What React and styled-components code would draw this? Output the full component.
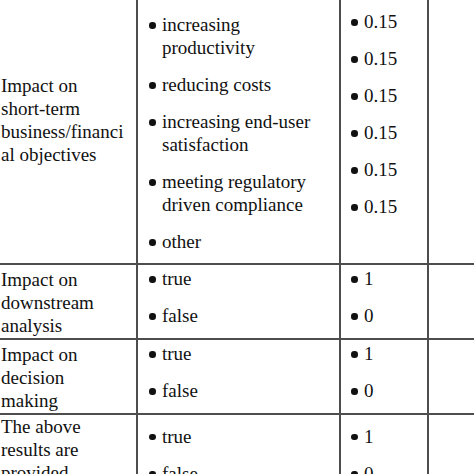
import styled, { createGlobalStyle } from "styled-components";

const GlobalStyle = createGlobalStyle`
  html, body {
    margin: 0;
    padding: 0;
    background: #fff;
    overflow: hidden;
  }
`;

const Table = styled.table`
  border-collapse: collapse;
  table-layout: fixed;
  width: 563px;
  margin: -25.5px 0 0 -4px;
  font-family: "Liberation Serif", "Times New Roman", serif;
  font-size: 19px;
  line-height: 23px;
  color: #111;
`;

const Cell = styled.td`
  border: 2px solid #4d4d4d;
  vertical-align: ${(p) => (p.$middle ? "middle" : "top")};
  padding: ${(p) => p.$top || 0}px ${(p) => p.$right || 0}px
    ${(p) => p.$bottom || 0}px ${(p) => p.$left || 0}px;
`;

const Label = styled(Cell)`
  padding-left: 3px;
  padding-right: 10.5px;
`;

const List = styled.ul`
  list-style: none;
  margin: 0;
  padding: 0;
  display: flex;
  flex-direction: column;
  gap: 14px;
`;

const Item = styled.li`
  display: flex;
  align-items: flex-start;
  &::before {
    content: "";
    flex: none;
    width: 6.5px;
    height: 6.5px;
    margin: 9px 6.5px 0 0;
    border-radius: 50%;
    background: #111;
  }
`;

const rows = [
  {
    label: (
      <>
        Impact on short-term business/financi
        <br />
        al objectives
      </>
    ),
    middle: true,
    labelTop: 0,
    options: [
      "increasing productivity",
      "reducing costs",
      "increasing end-user satisfaction",
      "meeting regulatory driven compliance",
      "other",
    ],
    values: ["0.15", "0.15", "0.15", "0.15", "0.15", "0.15"],
    optTop: 36.5,
    optBottom: 10,
    valTop: 33.5,
  },
  {
    label: "Impact on downstream analysis",
    labelTop: 3,
    labelBottom: 1,
    options: ["true", "false"],
    values: ["1", "0"],
    optTop: 2,
    valTop: 2,
  },
  {
    label: "Impact on decision making",
    labelTop: 3,
    labelBottom: 1,
    options: ["true", "false"],
    values: ["1", "0"],
    optTop: 2,
    valTop: 2,
  },
  {
    label: "The above results are provided",
    labelTop: 0,
    labelBottom: 10,
    options: ["true", "false"],
    values: ["1", "0"],
    optTop: 9.5,
    valTop: 9.5,
  },
];

export default function App() {
  return (
    <>
      <GlobalStyle />
      <Table>
        <colgroup>
          <col style={{ width: 140 }} />
          <col style={{ width: 203 }} />
          <col style={{ width: 88 }} />
          <col style={{ width: 132 }} />
        </colgroup>
        <tbody>
          {rows.map((r, i) => (
            <tr key={i}>
              <Label
                $middle={r.middle}
                $top={r.labelTop}
                $bottom={r.labelBottom}
              >
                {r.label}
              </Label>
              <Cell $top={r.optTop} $bottom={r.optBottom} $left={11} $right={13}>
                <List>
                  {r.options.map((o) => (
                    <Item key={o}>{o}</Item>
                  ))}
                </List>
              </Cell>
              <Cell $top={r.valTop} $left={10} $right={3}>
                <List>
                  {r.values.map((v, j) => (
                    <Item key={j}>{v}</Item>
                  ))}
                </List>
              </Cell>
              <Cell />
            </tr>
          ))}
        </tbody>
      </Table>
    </>
  );
}
